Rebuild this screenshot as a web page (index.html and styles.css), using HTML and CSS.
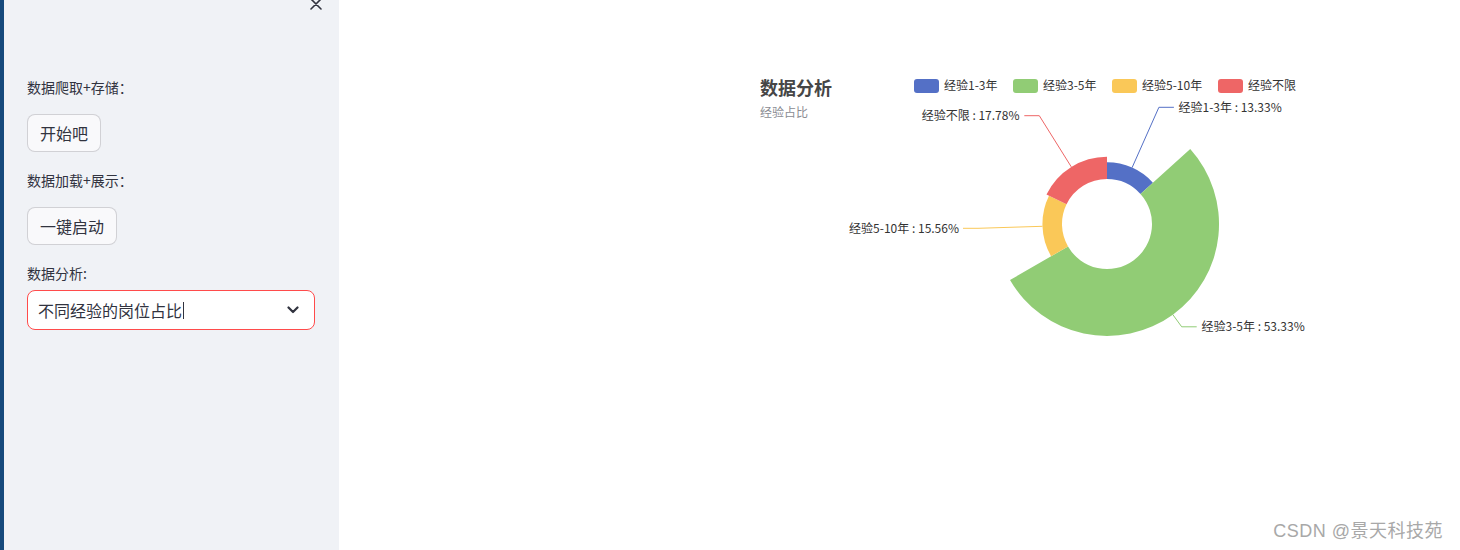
FILE: index.html
```html
<!DOCTYPE html>
<html lang="zh-CN">
<head>
<meta charset="utf-8">
<title>数据分析</title>
<link rel="stylesheet" href="styles.css">
</head>
<body>
<div class="app">
  <aside class="sidebar">
    <div class="sb-head">
      <button class="close" aria-label="关闭">
        <svg width="12" height="12" viewBox="0 0 12 12"><path d="M1 1 L11 11 M11 1 L1 11" stroke="#31333f" stroke-width="1.6" fill="none" stroke-linecap="round"/></svg>
      </button>
    </div>
    <div class="sb-body">
      <p class="lbl">数据爬取+存储：</p>
      <button class="btn">开始吧</button>
      <p class="lbl gap">数据加载+展示：</p>
      <button class="btn">一键启动</button>
      <p class="lbl gap">数据分析:</p>
      <div class="select">
        <span class="sel-text">不同经验的岗位占比<span class="caret"></span></span>
        <svg class="chev" width="12" height="8" viewBox="0 0 12 8"><polyline points="1.5,1.5 6,6 10.5,1.5" fill="none" stroke="#31333f" stroke-width="2.2" stroke-linecap="round" stroke-linejoin="round"/></svg>
      </div>
    </div>
  </aside>
  <main class="main">
    <svg class="chart" width="1121" height="550" viewBox="339 0 1121 550">
      <text class="c-title" x="760" y="86.5">数据分析</text>
      <text class="c-sub" x="760" y="111">经验占比</text>

      <rect x="914" y="79" width="25" height="14" rx="3" fill="#5470c6"/>
      <text class="c-leg" x="944" y="84.8">经验1-3年</text>
      <rect x="1013" y="79" width="25" height="14" rx="3" fill="#91cc75"/>
      <text class="c-leg" x="1043" y="84.8">经验3-5年</text>
      <rect x="1112" y="79" width="25" height="14" rx="3" fill="#fac858"/>
      <text class="c-leg" x="1142" y="84.8">经验5-10年</text>
      <rect x="1218" y="79" width="25" height="14" rx="3" fill="#ee6666"/>
      <text class="c-leg" x="1248" y="84.8">经验不限</text>

      <path d="M1107 162.25 A61.75 61.75 0 0 1 1152.89 182.68 L1140.44 193.89 A45 45 0 0 0 1107 179 Z" fill="#5470c6"/>
      <path d="M1190.23 149.06 A112 112 0 1 1 1010.01 280 L1068.03 246.5 A45 45 0 1 0 1140.44 193.89 Z" fill="#91cc75"/>
      <path d="M1051.10 256.28 A64.55 64.55 0 0 1 1048.98 195.70 L1066.55 204.27 A45 45 0 0 0 1068.03 246.5 Z" fill="#fac858"/>
      <path d="M1046.48 194.48 A67.34 67.34 0 0 1 1107 156.66 L1107 179 A45 45 0 0 0 1066.55 204.27 Z" fill="#ee6666"/>

      <polyline points="1132.1,167.6 1158.9,107.3 1173.9,107.3" fill="none" stroke="#5470c6" stroke-width="1"/>
      <polyline points="1172.8,314.6 1181.7,326.8 1196.7,326.8" fill="none" stroke="#91cc75" stroke-width="1"/>
      <polyline points="1042.5,226.3 978,228.3 963,228.3" fill="none" stroke="#fac858" stroke-width="1"/>
      <polyline points="1071.3,166.9 1039.3,115.7 1024.3,115.7" fill="none" stroke="#ee6666" stroke-width="1"/>

      <text class="c-lab" x="1178.5" y="106.2">经验1-3年 : 13.33%</text>
      <text class="c-lab" x="1201.5" y="325.7">经验3-5年 : 53.33%</text>
      <text class="c-lab end" x="959" y="227.2">经验5-10年 : 15.56%</text>
      <text class="c-lab end" x="1019.5" y="114.6">经验不限 : 17.78%</text>
    </svg>
    <div class="watermark">CSDN @景天科技苑</div>
  </main>
</div>
</body>
</html>
```

FILE: styles.css
```css
* { box-sizing: border-box; }
html, body {
  margin: 0;
  padding: 0;
  width: 1460px;
  height: 550px;
  overflow: hidden;
  background: #ffffff;
  font-family: "Noto Sans CJK SC", "Noto Sans", sans-serif;
  color: #31333f;
}
.app {
  display: flex;
  width: 1460px;
  height: 550px;
}
.sidebar {
  width: 339px;
  flex: 0 0 339px;
  height: 550px;
  background: #f0f2f6;
  border-left: 4px solid #164a7c;
  display: flex;
  flex-direction: column;
}
.sb-head {
  height: 77px;
  display: flex;
  justify-content: flex-end;
  align-items: flex-start;
  padding-right: 17px;
}
.close {
  border: 0;
  background: transparent;
  padding: 0;
  margin-top: -2px;
  width: 12px;
  height: 12px;
  display: block;
}
.close svg { display: block; }
.sb-body {
  display: flex;
  flex-direction: column;
  align-items: flex-start;
  padding-left: 23px;
}
.lbl {
  margin: 0;
  font-size: 14px;
  line-height: 20px;
  color: #31333f;
}
.lbl.gap { margin-top: 18px; }
.btn {
  margin-top: 17px;
  height: 38px;
  padding: 0 12px;
  border: 1px solid rgba(49, 51, 63, 0.2);
  border-radius: 8px;
  background: #f9f9fb;
  font-family: inherit;
  font-size: 16px;
  line-height: 36px;
  color: #31333f;
}
.select {
  margin-top: 7px;
  width: 288px;
  height: 40px;
  border: 1px solid #ff4b4b;
  border-radius: 8px;
  background: #ffffff;
  display: flex;
  align-items: center;
  justify-content: space-between;
  padding: 0 15px 0 10px;
}
.sel-text {
  font-size: 16px;
  line-height: 22px;
  color: #31333f;
  display: flex;
  align-items: center;
}
.caret {
  display: inline-block;
  width: 1px;
  height: 17px;
  background: #31333f;
  margin-left: 1px;
}
.chev { display: block; }
.main {
  flex: 1;
  position: relative;
  height: 550px;
  background: #ffffff;
}
.chart { display: block; }
.chart text {
  font-family: "Noto Sans CJK SC", "Noto Sans", sans-serif;
  dominant-baseline: central;
}
.c-title {
  font-size: 18px;
  font-weight: 700;
  fill: #464646;
}
.c-sub {
  font-size: 12px;
  fill: #8a8c93;
}
.c-leg {
  font-size: 12px;
  fill: #333333;
}
.c-lab {
  font-size: 12px;
  fill: #333333;
}
.c-lab.end { text-anchor: end; }
.watermark {
  position: absolute;
  right: 17px;
  bottom: 7px;
  font-family: "Liberation Sans", "Noto Sans CJK SC", sans-serif;
  font-size: 18px;
  line-height: 24px;
  color: #a8a8a8;
  letter-spacing: 0.5px;
  text-shadow: 0 0 1px #ffffff;
}
```
